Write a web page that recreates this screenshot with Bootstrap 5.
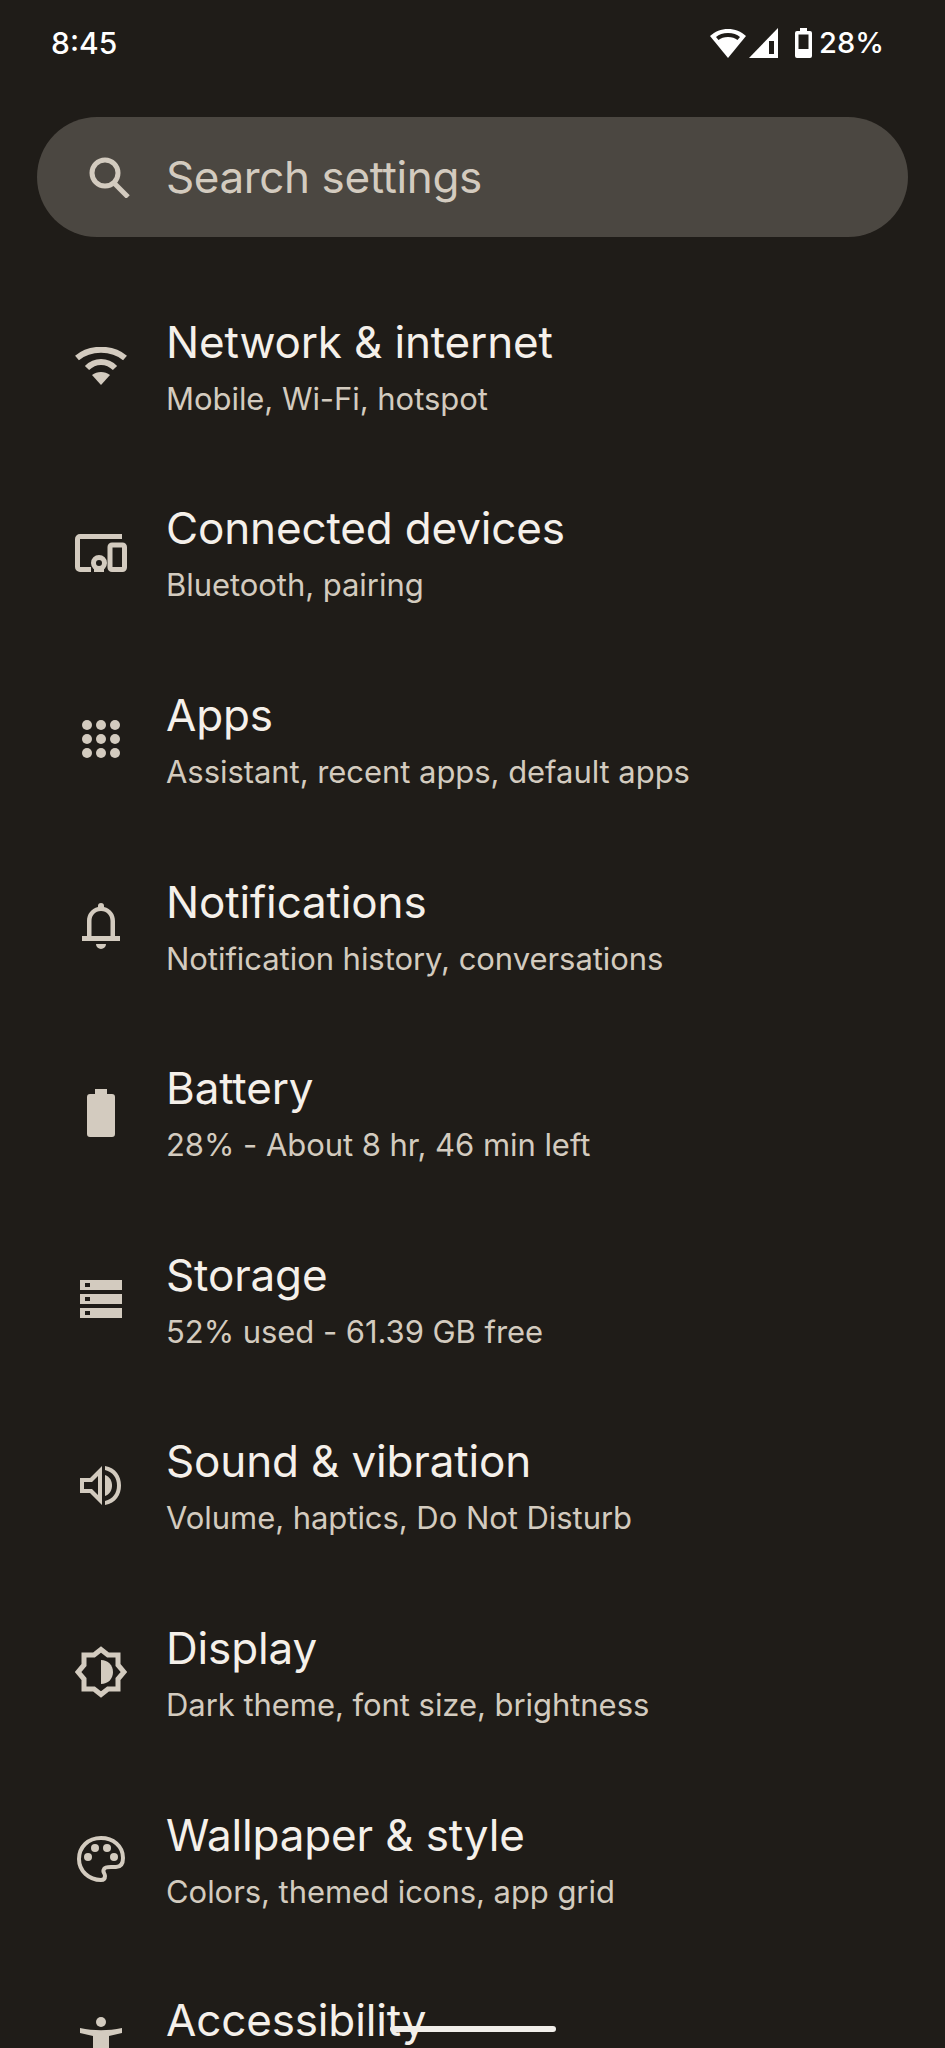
<!DOCTYPE html>
<html lang="en">

<head>
    <meta charset="UTF-8">
    <title>Settings</title>
    <link href="https://cdn.jsdelivr.net/npm/bootstrap@5.3.0/dist/css/bootstrap.min.css" rel="stylesheet">
    <style>
        html, body { background: #1f1c18; height: 2048px; overflow: hidden; }
        body { font-family: Inter, "Noto Sans", sans-serif; }
        .status-row { height: 86px; padding: 0 61px 0 51px; color: #fff; font-size: 30px; font-weight: 500; }
        .status-icons { gap: 3px; font-size: 29px; }
        .batt-icon { margin-left: 14px; }
        .search-pill { height: 120px; margin: 31px 37px 0; padding-left: 52px; background: #4b4741; border-radius: 60px; color: #d3cbbf; font-size: 44px; letter-spacing: -.4px; }
        .search-pill svg { margin-right: 36px; }
        .setting-list { padding-top: 36px; }
        .setting-row { height: 186.6px; padding-left: 67px; }
        .icon-slot { width: 68px; margin-right: 31px; flex: none; }
        .icon-slot svg { display: block; margin: 0 auto; }
        .row-title { color: #f5f0ea; font-size: 44px; line-height: 58px; letter-spacing: -.15px; }
        .row-sub { color: #d3cbbf; font-size: 31px; line-height: 42px; margin-top: 7px; letter-spacing: -.05px; }
        .end-row { padding-top: 42px; }
        .end-row .icon-slot { margin-top: 23px; }
        .end-row .row-title { line-height: 53px; }
        .gesture-pill { position: absolute; left: 390px; top: 2026px; width: 166px; height: 6px; border-radius: 3px; background: #f1eeea; }
    </style>
</head>

<body class="position-relative">
    <div class="status-row d-flex align-items-center justify-content-between">
        <span>8:45</span>
        <span class="status-icons d-flex align-items-center">
            <svg width="36" height="30" viewBox="0 0 36 30"><path fill="#fff" d="M18 1C11 1 5 3.500 0 8L18 30 36 8C31 3.500 25 1 18 1Z"/><path fill="#1f1c18" d="M18 5C13 5 9 6.500 6 9L8.500 12C11 10 14 9 18 9s7 1 9.500 3L30 9C27 6.500 23 5 18 5Z"/></svg>
            <svg width="29" height="30" viewBox="0 0 29 30"><path fill="#fff" d="M29 0V30H0Z"/><path fill="#1f1c18" d="M20 13h5v13h-5z"/></svg>
            <svg class="batt-icon" width="17" height="30" viewBox="0 0 17 30"><path fill="#fff" d="M5 0h7v3h3a2 2 0 0 1 2 2v23a2 2 0 0 1-2 2H2a2 2 0 0 1-2-2V5a2 2 0 0 1 2-2h3Z"/><path fill="#1f1c18" d="M3.500 6.500h10V21h-10z"/></svg>
            <span class="ms-1">28%</span>
        </span>
    </div>

    <div class="search-pill d-flex align-items-center">
        <svg width="41" height="41" viewBox="0 0 41 41" fill="none" stroke="#d3cbbf" stroke-width="5"><circle cx="16" cy="16" r="13"/><path d="M25 26l14 14"/></svg>
        <span>Search settings</span>
    </div>

    <div class="setting-list">
        <div class="setting-row d-flex align-items-center">
            <div class="icon-slot">
                <svg width="52" height="38" viewBox="0 0 52 38" fill="none" stroke="#d3cbbf" stroke-width="6"><path d="M2 11C15 0 37 0 50 11"/><path d="M12 21C20 13 32 13 40 21"/><path fill="#d3cbbf" stroke="none" d="M26 38l-9-10c5-4 13-4 18 0Z"/></svg>
            </div>
            <div><div class="row-title">Network &amp; internet</div><div class="row-sub">Mobile, Wi-Fi, hotspot</div></div>
        </div>
        <div class="setting-row d-flex align-items-center">
            <div class="icon-slot">
                <svg width="52" height="38" viewBox="0 0 52 38" fill="none" stroke="#d3cbbf" stroke-width="5"><path d="M47 2.500H5a2.500 2.500 0 0 0-2.500 2.500v28a2.500 2.500 0 0 0 2.500 2.500h11"/><rect x="35" y="11" width="14.500" height="24.500" rx="2"/><circle cx="24" cy="29" r="5.500"/><path stroke-width="3" d="M19 36.500h10"/></svg>
            </div>
            <div><div class="row-title">Connected devices</div><div class="row-sub">Bluetooth, pairing</div></div>
        </div>
        <div class="setting-row d-flex align-items-center">
            <div class="icon-slot">
                <svg width="38" height="38" viewBox="0 0 38 38" fill="#d3cbbf"><circle cx="5" cy="5" r="5"/><circle cx="19" cy="5" r="5"/><circle cx="33" cy="5" r="5"/><circle cx="5" cy="19" r="5"/><circle cx="19" cy="19" r="5"/><circle cx="33" cy="19" r="5"/><circle cx="5" cy="33" r="5"/><circle cx="19" cy="33" r="5"/><circle cx="33" cy="33" r="5"/></svg>
            </div>
            <div><div class="row-title">Apps</div><div class="row-sub">Assistant, recent apps, default apps</div></div>
        </div>
        <div class="setting-row d-flex align-items-center">
            <div class="icon-slot">
                <svg width="38" height="46" viewBox="0 0 38 46" fill="#d3cbbf"><path d="M19 0a3 3 0 0 1 3 3v1c7 1.500 11 7.500 11 14v15h5v5H0v-5h5V18C5 11.500 9 5.500 16 4V3a3 3 0 0 1 3-3Zm0 8C13 8 9.500 12.500 9.500 18v15h19V18C28.500 12.500 25 8 19 8ZM14 41h10a5 5 0 0 1-10 0Z"/></svg>
            </div>
            <div><div class="row-title">Notifications</div><div class="row-sub">Notification history, conversations</div></div>
        </div>
        <div class="setting-row d-flex align-items-center">
            <div class="icon-slot">
                <svg width="28" height="48" viewBox="0 0 28 48" fill="#d3cbbf"><path d="M8 0h12v5h5a3 3 0 0 1 3 3v37a3 3 0 0 1-3 3H3a3 3 0 0 1-3-3V8a3 3 0 0 1 3-3h5Z"/></svg>
            </div>
            <div><div class="row-title">Battery</div><div class="row-sub">28% - About 8 hr, 46 min left</div></div>
        </div>
        <div class="setting-row d-flex align-items-center">
            <div class="icon-slot">
                <svg width="42" height="38" viewBox="0 0 42 38" fill="#d3cbbf"><path fill-rule="evenodd" d="M0 0h42v10H0ZM5 3v4h5V3ZM0 14h42v10H0ZM5 17v4h5v-4ZM0 28h42v10H0ZM5 31v4h5v-4Z"/></svg>
            </div>
            <div><div class="row-title">Storage</div><div class="row-sub">52% used - 61.39 GB free</div></div>
        </div>
        <div class="setting-row d-flex align-items-center">
            <div class="icon-slot">
                <svg width="42" height="40" viewBox="0 0 42 40" fill="#d3cbbf"><path fill-rule="evenodd" d="M0 12H10L22 0V39L10 27H0ZM4 16V23H12L18 29V10L12 16Z"/><path d="M25 0C36 2 41 10 41 19.500S36 37 25 39V35C33 33 37 27 37 19.500S33 6 25 4Z"/><path d="M25 9C30 11 32 15 32 19.500S30 28 25 30Z"/></svg>
            </div>
            <div><div class="row-title">Sound &amp; vibration</div><div class="row-sub">Volume, haptics, Do Not Disturb</div></div>
        </div>
        <div class="setting-row d-flex align-items-center">
            <div class="icon-slot">
                <svg width="52" height="52" viewBox="0 0 52 52"><path fill="none" stroke="#d3cbbf" stroke-width="5" d="M26 3.500l7 5.500h10v10l6 7-6 7v10H33l-7 5.500-7-5.500H9V33l-6-7 6-7V9h10Z"/><path fill="#d3cbbf" d="M26 14c7 0 12 5 12 12s-5 12-12 12Z"/></svg>
            </div>
            <div><div class="row-title">Display</div><div class="row-sub">Dark theme, font size, brightness</div></div>
        </div>
        <div class="setting-row d-flex align-items-center">
            <div class="icon-slot">
                <svg width="48" height="46" viewBox="0 0 48 46"><path fill="none" stroke="#d3cbbf" stroke-width="4" d="M24 2C11 2 2 11 2 23s10 21 22 21c3 0 4-2 4-4 0-3-3-4-1-7 1-2 4-2 7-2h5c5 0 7-4 7-9C46 10 36 2 24 2Z"/><g fill="#d3cbbf"><circle cx="11" cy="21" r="4"/><circle cx="18" cy="12" r="4"/><circle cx="30" cy="12" r="4"/><circle cx="37" cy="21" r="4"/></g></svg>
            </div>
            <div><div class="row-title">Wallpaper &amp; style</div><div class="row-sub">Colors, themed icons, app grid</div></div>
        </div>
        <div class="setting-row end-row d-flex align-items-start">
            <div class="icon-slot">
                <svg width="42" height="44" viewBox="0 0 42 44" fill="#d3cbbf"><circle cx="21" cy="5" r="5"/><path d="M0 11c14 3 28 3 42 0v5l-13 3v25h-16V19L0 16Z"/></svg>
            </div>
            <div><div class="row-title">Accessibility</div></div>
        </div>
    </div>

    <div class="gesture-pill"></div>
</body>

</html>
